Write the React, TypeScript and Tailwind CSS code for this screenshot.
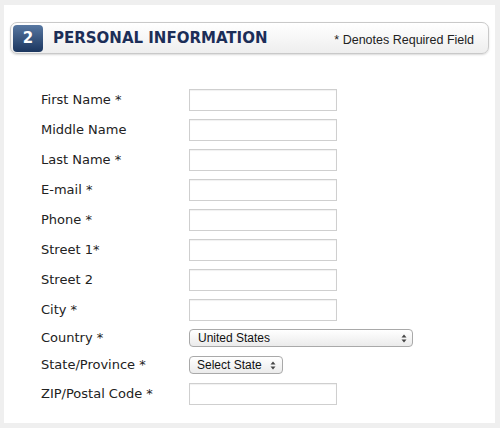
import React from "react";

const textFields = [
  "First Name *",
  "Middle Name",
  "Last Name *",
  "E-mail *",
  "Phone *",
  "Street 1*",
  "Street 2",
  "City *",
];

const Arrows = () => (
  <svg width="6" height="9" viewBox="0 0 6 9" className="shrink-0">
    <path d="M3 0.5 L5.5 3.5 L0.5 3.5 Z" fill="#444" />
    <path d="M3 8.5 L5.5 5.5 L0.5 5.5 Z" fill="#444" />
  </svg>
);

const Label = ({ children }: { children: React.ReactNode }) => (
  <div className="w-[148px] shrink-0 text-[13px] leading-[18px] text-[#222]">{children}</div>
);

export default function App() {
  return (
    <div className="w-[500px] h-[428px] bg-[#efefef] pt-[5px] pl-[4px] font-['DejaVu_Sans',Verdana,sans-serif]">
      <div className="w-[491px] h-[418px] bg-white pt-[17px] pl-[6px]">
        {/* Header bar */}
        <div className="w-[479px] h-[32px] flex items-center rounded-[7px] border border-[#c9c9c9] bg-gradient-to-b from-white to-[#eeeeee] shadow-[0_1px_2px_rgba(0,0,0,0.15)] pl-[2px] pr-[14px]">
          <div className="w-[30px] h-[27px] rounded-[4px] bg-gradient-to-b from-[#5878a2] to-[#1b365f] flex items-center justify-center text-white font-bold text-[15px]">
            2
          </div>
          <div className="ml-[10px] text-[15px] font-bold text-[#1c2e58]">
            PERSONAL INFORMATION
          </div>
          <div className="ml-auto mt-[5px] text-[12.5px] text-[#222] font-['Liberation_Sans',Arial,sans-serif]">
            * Denotes Required Field
          </div>
        </div>

        {/* Form */}
        <div className="flex flex-col gap-2 pl-[31px] mt-[35px]">
          {textFields.map((f) => (
            <div key={f} className="flex items-center">
              <Label>{f}</Label>
              <div className="w-[148px] h-[22px] border border-[#cfcfcf] bg-white shadow-[inset_0_1px_1px_rgba(0,0,0,0.06)]" />
            </div>
          ))}
          <div className="flex items-center">
            <Label>Country *</Label>
            <div className="w-[224px] h-[18px] rounded-[4px] border border-[#a9a9a9] bg-gradient-to-b from-white to-[#ebebeb] flex items-center justify-between pl-[8px] pr-[5px] text-[12px] text-[#111] font-['Liberation_Sans',Arial,sans-serif]">
              <span>United States</span>
              <Arrows />
            </div>
          </div>
          <div className="flex items-center mt-px">
            <Label>State/Province *</Label>
            <div className="w-[94px] h-[18px] rounded-[4px] border border-[#a9a9a9] bg-gradient-to-b from-white to-[#ebebeb] flex items-center justify-between pl-[7px] pr-[6px] text-[12px] text-[#111] font-['Liberation_Sans',Arial,sans-serif]">
              <span>Select State</span>
              <Arrows />
            </div>
          </div>
          <div className="flex items-center mt-px">
            <Label>ZIP/Postal Code *</Label>
            <div className="w-[148px] h-[22px] border border-[#cfcfcf] bg-white shadow-[inset_0_1px_1px_rgba(0,0,0,0.06)]" />
          </div>
        </div>
      </div>
    </div>
  );
}
